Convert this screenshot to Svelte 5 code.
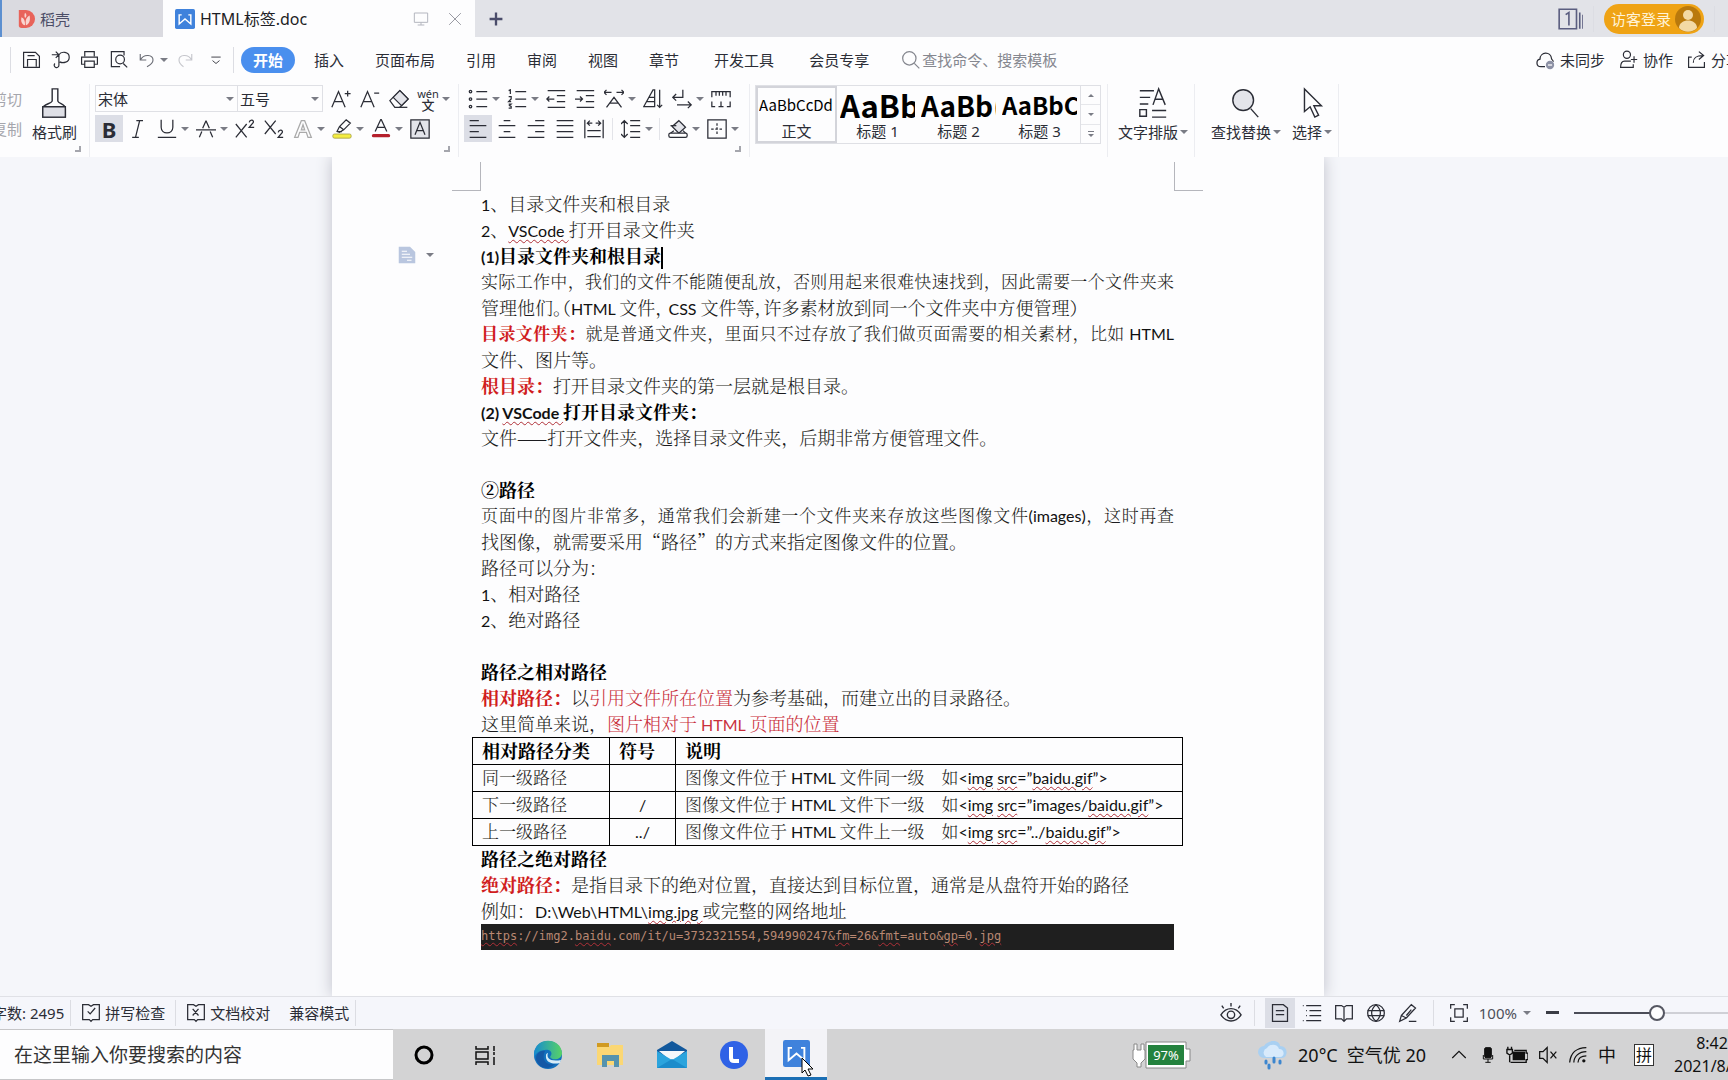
<script>
  const icons = {
    save: '<path d="M2 3h15l5 5v14H2z"/><path d="M7 21v-9h11v9M7 7h9"/>',
    output: '<path d="M1 6h8M6 2l4 4-4 4M5 17a3 3 0 1 0 5 2V6c3-5 13-4 13 3s-8 8-12 6"/>',
    print: '<path d="M6 8V2h12v6M6 18H2V9h20v9h-4M6 14h12v8H6z"/>',
    preview: '<path d="M19 7V2H3v19h11M18 17l5 5"/><circle cx="14" cy="12" r="5.500"/>',
    undo: '<path d="M3 4v8h8M3 12c5-9 17-7 17 0 0 4-4 7-8 9"/>',
    redo: '<path d="M21 4v8h-8M21 12c-5-9-17-7-17 0 0 4 3 7 6 9"/>',
    more: '<path d="M4 7h16M6 13l6 5 6-5"/>',
    search: '<circle cx="10" cy="10" r="8"/><path d="M16 16l6 6"/>',
    cloud: '<path d="M12 20H7c-6 0-6-8-1-9 0-9 13-10 14 0 1 1 2 2 2 3"/><circle cx="18" cy="18" r="5" fill="#8d91a5" stroke="none"/><path d="M15.500 18h5" stroke="#fff"/>',
    person: '<circle cx="10" cy="6" r="4.500"/><path d="M15 14H7c-3 0-5 2-5 8h16v-4M19 8v8M15 12h8"/>',
    share: '<path d="M6 9H2v13h20v-7M8 16c0-7 4-9 12-9M15 2l6 5-6 5"/>',
    grow: '<path d="M1 22L9 3l8 19M4 15h10M20 2v7M16.500 5.500h7"/>',
    shrink: '<path d="M1 22L9 3l8 19M4 15h10M17 5h6"/>',
    eraser: '<path d="M1 14L13 2l10 10-10 10H7z" /><path d="M5 10L13 2l10 10-8 8z" fill="#e3e4ea"/><path d="M12 22h10"/>',
    italic: '<path d="M10 2h8M5 22h8M14 2l-5 20"/>',
    under: '<path d="M5 1v9c0 9 14 9 14 0V1M1 22h22"/>',
    strike: '<path d="M12 2l-4 9M12 2l4 9M0 13h24M7 15l-3 7M17 15l3 7"/>',
    sup: '<path d="M1 6l13 16M14 6L1 22M17 4c1-4 6-3 5 0l-5 6h6"/>',
    sub: '<path d="M1 2l13 16M14 2L1 18M17 16c1-4 6-3 5 0l-5 6h6"/>',
    outline: '<path d="M2 22L10 2h4l8 20h-4l-2-6H8l-2 6zM10 13h4l-2-6z" stroke="#aaa"/>',
    marker: '<path d="M6 15l3-6 8-8 5 4-8 8-5 3zM9 9l5 4M6 15h6"/><rect x="1" y="18" width="22" height="5" rx="2" fill="#f4ed42" stroke="#a5a04a" stroke-width="1"/>',
    color: '<path d="M5 15L12 0l7 15M8 10h8"/><rect x="1" y="18" width="22" height="4" rx="2" fill="#b5202c" stroke="none"/>',
    boxed: '<path d="M1 1h22v22H1z" fill="#e3e4ea"/><path d="M6 19L12 4l6 15M8 14h8"/>',
    bullets: '<path d="M10 3h13M10 12h13M10 21h13"/><circle cx="3" cy="3" r="1.500"/><circle cx="3" cy="12" r="1.500"/><circle cx="3" cy="21" r="1.500"/>',
    numbers: '<path d="M10 3h13M10 12h13M10 21h13M2 2l2-1v5M2 9h3v3l-3 3h3M2 18h3l-2 2 2 1v2H2"/>',
    outdent: '<path d="M2 2h21M13 8h10M13 15h10M2 22h21M1 12h9M4 9l-3 3 3 3"/>',
    indent: '<path d="M2 2h21M13 8h10M13 15h10M2 22h21M0 12h9M6 9l3 3-3 3"/>',
    scale: '<path d="M3 22L12 10l9 12M7 17h10M0 4h9M3 1L0 4l3 3M15 4h9M21 1l3 3-3 3"/>',
    sort: '<path d="M1 21L12 1h2v20zM7 10h7M5 15h9M20 1v21M17 19l3 3 3-3"/>',
    wrap: '<path d="M13 1v9H1M5 6l-4 4 4 4M6 19h17M19 15l4 4-4 4"/>',
    ruler: '<path d="M1 10V3h22v7M6 3v5M10 3v5M14 3v5M18 3v5M1 15v6h4M12 15v6M9 21h6M19 21h4v-6"/>',
    left: '<path d="M2 2h11M2 8h20M2 15h11M2 22h20"/>',
    center: '<path d="M8 2h8M2 8h20M8 15h8M2 22h20"/>',
    right: '<path d="M11 2h11M2 8h20M11 15h11M2 22h20"/>',
    justify: '<path d="M2 2h20M2 8h20M2 15h20M2 22h20"/>',
    spread: '<path d="M1 1v22M23 1v22M4 14h16M4 21h16M4 5h6M14 5h6M7 2L4 5l3 3M17 2l3 3-3 3"/>',
    spacing: '<path d="M4 2v20M0 6l4-4 4 4M0 18l4 4 4-4M11 2h12M11 8h12M11 15h12M11 22h12"/>',
    fill: '<path d="M5 9l8-7 8 8-8 7z" fill="#e3e4ea"/><path d="M3 8h7"/><path d="M3 17l4-3M21 17l-3-3"/><rect x="1" y="17" width="22" height="5" rx="2" fill="#fff"/>',
    border: '<path d="M1 1h22v22H1z"/><path d="M12 5v14M5 12h14" stroke-dasharray="3 2"/>',
    brush: '<path d="M14 2h6v13c1 3 8 3 8 8v9H4v-9c0-5 9-5 10-8z"/><path d="M4 21h24v11H4z" fill="#dedfe6"/>',
    textlay: '<path d="M3 4h15M3 11h11M3 18h9M3 24h7v7H3zM16 25h15M16 32h15M17 19L23 2l7 17M19 13h8"/>',
    find: '<circle cx="14" cy="14" r="11" fill="#e3e4ea"/><path d="M22 23l8 9"/>',
    select: '<path d="M9 2v24l6-5 5 11 4-2-5-10h8z"/>',
    pages: '<path d="M2 3h16v18H2zM21 6v15M24 8v13M8 8l3-2v12"/>',
    spell: '<path d="M12 22l-2-2H2V2h7l3 2 3-2h7v18h-8zM8 10l3 3 6-7"/>',
    proof: '<path d="M12 22l-2-2H2V2h7l3 2 3-2h7v18h-8zM8 7l7 8M15 7l-7 8"/>',
    eye: '<path d="M1 14c6-9 16-9 22 0-6 9-16 9-22 0zM12 5V1M4 7L2 4M20 7l2-3"/><circle cx="12" cy="14" r="4"/>',
    doc: '<path d="M3 2h13l5 4v16H3zM7 9h10M7 14h10"/>',
    list: '<path d="M5 3h18M9 9h14M9 15h14M5 21h18M1 3h1M5 9h1M5 15h1M1 21h1"/>',
    book: '<path d="M12 22l-3-3H2V3h7l3 2 3-2h7v16h-7zM12 5v16"/>',
    globe: '<circle cx="12" cy="12" r="10"/><path d="M12 2c-7 6-7 14 0 20M12 2c7 6 7 14 0 20M2 9h20M2 15h20"/>',
    pen: '<path d="M4 15L16 2l5 4L10 18l-8 4zM13 22h9M4 15l6 3M16 8l-6 7"/>',
    focus: '<path d="M2 7V2h5M17 2h5v5M22 17v5h-5M7 22H2v-5M7 7h10v10H7z"/>',
    up: '<path d="M3 16l9-9 9 9"/>',
    mic: '<rect x="7" y="1" width="10" height="15" rx="2" fill="currentColor"/><path d="M5 12v6h14v-6M12 18v5M8 23h8"/>',
    power: '<path d="M8 9h12v8H8z" fill="currentColor"/><path d="M5 20h17v-3h2v-7h-2V7H9M4 12v8M1 6h6v4l-3 2-3-2zM2 6V3M6 6V3"/>',
    mute: '<path d="M2 8h4l5-5v18l-5-5H2zM15 8l7 8M22 8l-7 8"/>',
    wifi: '<path d="M2 21C3 10 10 3 22 3M7 21c0-7 6-13 15-13M12 21c0-5 4-8 10-8"/><circle cx="19" cy="19" r="2" fill="currentColor" stroke="none"/>',
    screen: '<path d="M2 3h20v14H2zM12 17v4M7 21h10"/>',
    close: '<path d="M2 2l20 20M22 2L2 22"/>',
    plus: '<path d="M12 1v22M1 12h22"/>',
    note: '<path d="M1 1h15l7 7v15H1z" fill="#b9c6df" stroke="none"/><path d="M5 7h7M5 11h11M5 15h14M12 19h6" stroke="#fff"/>'
  };

  const menus = ['插入', '页面布局', '引用', '审阅', '视图', '章节', '开发工具', '会员专享'];
  const quick = [['save', '保存'], ['output', '输出'], ['print', '打印'], ['preview', '打印预览']];
  const fontRow1 = [['grow', '增大字号'], ['shrink', '减小字号'], ['eraser', '清除格式']];
  const fontRow2 = [
    ['italic', '倾斜'], ['under', '下划线', 1], ['strike', '删除线', 1], ['sup', '上标'], ['sub', '下标'],
    ['outline', '文字效果', 1], ['marker', '突出显示', 1], ['color', '字体颜色', 1], ['boxed', '字符底纹']
  ];
  const paraRow1 = [
    ['bullets', '项目符号', 1], ['numbers', '编号', 1], ['outdent', '减少缩进'], ['indent', '增加缩进'],
    ['scale', '中文版式', 1], ['sort', '排序'], ['wrap', '显示标记', 1], ['ruler', '制表位']
  ];
  const aligns = [['center', '居中'], ['right', '右对齐'], ['justify', '两端对齐'], ['spread', '分散对齐']];
  const headings = [['标题 1', 'h1', 'AaBb'], ['标题 2', 'h2', 'AaBb('], ['标题 3', 'h3', 'AaBbCc']];
  const views = [['list', '大纲'], ['book', '阅读'], ['globe', 'Web 版式'], ['pen', '写作']];
  let zoom = $state(49);
</script>

{#snippet icon(name, cls = 'i20', box = 24)}
  <svg class="ico {cls}" viewBox="0 0 {box} {box}" aria-hidden="true">{@html icons[name]}</svg>
{/snippet}

{#snippet caret()}<span class="caret"></span>{/snippet}

{#snippet tool(name, label, drop)}
  <button class="tool" class:drop aria-label={label}>
    <span class="cell">{@render icon(name)}</span>{#if drop}{@render caret()}{/if}
  </button>
{/snippet}

{#snippet wps()}
  <svg class="wps" viewBox="0 0 24 24" aria-hidden="true">
    <rect width="24" height="24" rx="2" fill="#3f82dc" />
    <path d="M8 7H5v11l7-6 7 6V7h-3" fill="none" stroke="#fff" stroke-width="1.700" />
  </svg>
{/snippet}

<div class="app">
  <header class="tabs">
    <button class="tab home">
      <svg class="i18" viewBox="0 0 20 20" aria-hidden="true"><path d="M2 0h8a10 10 0 0 1 0 20H5a3 3 0 0 1-3-3z" fill="#e8635a" /><path d="M9 17C5 16 4 12 5 8c3 1 4 4 4 9zM10 17c-1-5 0-9 4-11 1 5 0 9-4 11z" fill="#f9d5d0" /><path d="M9 9c-1-2-1-4 0-6 2 2 2 4 0 6z" fill="#f9d5d0" /></svg>
      稻壳
    </button>
    <div class="tab current">
      {@render wps()}<span class="name">HTML标签.doc</span>
      {@render icon('screen', 'i16 faint')}
      <button class="plain" aria-label="关闭">{@render icon('close', 'i14')}</button>
    </div>
    <button class="plain add" aria-label="新建">{@render icon('plus', 'i14 bold')}</button>
    <div class="account">
      <button class="plain" aria-label="窗口">{@render icon('pages', 'i26')}</button>
      <span class="bar"></span>
      <button class="login">访客登录
        <svg viewBox="0 0 26 26" aria-hidden="true"><circle cx="13" cy="13" r="13" fill="#b9790c" /><circle cx="13" cy="9" r="5" fill="#f3d9a4" /><path d="M4 22c0-10 18-10 18 0-5 5-13 5-18 0" fill="#f3d9a4" /></svg>
      </button>
      <span class="bar"></span>
    </div>
  </header>

  <nav class="menu">
    <span class="bar"></span>
    <div class="quick">
      {#each quick as [n, l]}<button class="plain" aria-label={l}>{@render icon(n, 'i19')}</button>{/each}
    </div>
    <button class="plain undo" aria-label="撤销">{@render icon('undo', 'i18')}{@render caret()}</button>
    <button class="plain redo" aria-label="恢复">{@render icon('redo', 'i18')}</button>
    <button class="plain morebtn" aria-label="更多">{@render icon('more', 'i14')}</button>
    <span class="bar"></span>
    <button class="start">开始</button>
    <div class="items">
      {#each menus as m, i}<button class="plain" class:wide={i > 5}>{m}</button>{/each}
    </div>
    <label class="find">{@render icon('search', 'i20')}<input placeholder="查找命令、搜索模板" aria-label="查找命令、搜索模板" /></label>
    <div class="sync">
      <button class="plain">{@render icon('cloud', 'i20')}未同步</button>
      <button class="plain">{@render icon('person', 'i19')}协作</button>
      <button class="plain">{@render icon('share', 'i19')}分享</button>
    </div>
  </nav>

  <section class="ribbon">
    <div class="group clip">
      <div class="cut"><button class="plain">剪切</button><button class="plain">复制</button></div>
      <button class="big">{@render icon('brush', 'i32', 34)}<span>格式刷</span></button>
      <span class="corner"></span>
    </div>
    <div class="group">
      <div class="row">
        <div class="combo">
          <label class="family"><select aria-label="字体"><option>宋体</option></select>{@render caret()}</label>
          <label class="size"><select aria-label="字号"><option>五号</option></select>{@render caret()}</label>
        </div>
        {#each fontRow1 as [n, l]}{@render tool(n, l)}{/each}
        <button class="tool drop" aria-label="拼音指南"><span class="cell pinyin"><small>wén</small><b>文</b></span>{@render caret()}</button>
      </div>
      <div class="row">
        <button class="tool on strong" aria-label="加粗">B</button>
        {#each fontRow2 as [n, l, d]}{@render tool(n, l, d)}{/each}
      </div>
      <span class="corner"></span>
    </div>
    <div class="group para">
      <div class="row">
        {#each paraRow1 as [n, l, d]}{@render tool(n, l, d)}{/each}
      </div>
      <div class="row">
        <button class="tool on" aria-label="左对齐"><span class="cell">{@render icon('left')}</span></button>
        {#each aligns as [n, l]}{@render tool(n, l)}{/each}
        <span class="sep"></span>
        {@render tool('spacing', '行距', 1)}
        <span class="sep"></span>
        {@render tool('fill', '底纹', 1)}
        {@render tool('border', '边框', 1)}
      </div>
      <span class="corner"></span>
    </div>
    <div class="group">
      <div class="styles">
        <button class="style chosen"><span class="demo">AaBbCcDd</span><span>正文</span></button>
        {#each headings as [label, cls, sample]}
          <button class="style"><span class="demo {cls}">{sample}</span><span>{label}</span></button>
        {/each}
        <div class="spin">
          <button aria-label="上移"><span class="caret flip"></span></button>
          <button aria-label="下移">{@render caret()}</button>
          <button aria-label="全部样式" class="all">{@render caret()}</button>
        </div>
      </div>
    </div>
    <div class="group">
      <button class="big">{@render icon('textlay', 'i32', 34)}<span>文字排版{@render caret()}</span></button>
    </div>
    <div class="group pair">
      <button class="big">{@render icon('find', 'i32', 34)}<span>查找替换{@render caret()}</span></button>
      <button class="big">{@render icon('select', 'i32', 34)}<span>选择{@render caret()}</span></button>
    </div>
  </section>

  <main class="canvas">
    <article class="page">
      <div class="marks"><span></span><span></span></div>
      <p><span class="en">1</span>、目录文件夹和根目录</p>
      <p><span class="en">2</span>、<span class="en"><u>VSCode&nbsp;</u></span>打开目录文件夹</p>
      <p class="b anchor"><button class="note" aria-label="段落布局">{@render icon('note', 'i18')}{@render caret()}</button><span class="en">(1)</span>目录文件夹和根目录<span class="cursor"></span></p>
      <p class="full">实际工作中，我们的文件不能随便乱放，否则用起来很难快速找到，因此需要一个文件夹来</p>
      <p class="tight">管理他们。（<span class="en">HTML&nbsp;</span>文件，<span class="en">&nbsp;CSS&nbsp;</span>文件等，许多素材放到同一个文件夹中方便管理）</p>
      <p class="full"><b class="red">目录文件夹：</b>就是普通文件夹，里面只不过存放了我们做页面需要的相关素材，比如<span class="en">&nbsp;HTML</span></p>
      <p>文件、图片等。</p>
      <p><b class="red">根目录：</b>打开目录文件夹的第一层就是根目录。</p>
      <p class="b"><span class="en">(2)&nbsp;<u>VSCode&nbsp;</u></span>打开目录文件夹：</p>
      <p>文件——打开文件夹，选择目录文件夹，后期非常方便管理文件。</p>
      <p>&nbsp;</p>
      <p class="b">②路径</p>
      <p class="full">页面中的图片非常多，通常我们会新建一个文件夹来存放这些图像文件<span class="en">(images)</span>，这时再查</p>
      <p>找图像，就需要采用“路径”的方式来指定图像文件的位置。</p>
      <p>路径可以分为：</p>
      <p><span class="en">1</span>、相对路径</p>
      <p><span class="en">2</span>、绝对路径</p>
      <p>&nbsp;</p>
      <p class="b">路径之相对路径</p>
      <p><b class="red">相对路径：</b>以<span class="rose">引用文件所在位置</span>为参考基础，而建立出的目录路径。</p>
      <p>这里简单来说，<span class="rose">图片相对于<span class="en">&nbsp;HTML&nbsp;</span>页面的位置</span></p>
      <table>
        <thead><tr><th class="kind">相对路径分类</th><th class="sign">符号</th><th>说明</th></tr></thead>
        <tbody>
          <tr><td>同一级路径</td><td></td><td>图像文件位于<span class="en">&nbsp;HTML&nbsp;</span>文件同一级　如<span class="en">&lt;<u>img</u> <u>src</u>=”<u>baidu.gif</u>”&gt;</span></td></tr>
          <tr><td>下一级路径</td><td class="mid"><span class="en">/</span></td><td>图像文件位于<span class="en">&nbsp;HTML&nbsp;</span>文件下一级　如<span class="en">&lt;<u>img</u> <u>src</u>=”images/<u>baidu.gif</u>”&gt;</span></td></tr>
          <tr><td>上一级路径</td><td class="mid"><span class="en">../</span></td><td>图像文件位于<span class="en">&nbsp;HTML&nbsp;</span>文件上一级　如<span class="en">&lt;<u>img</u> <u>src</u>=”../<u>baidu.gif</u>”&gt;</span></td></tr>
        </tbody>
      </table>
      <p class="b">路径之绝对路径</p>
      <p><b class="red">绝对路径：</b>是指目录下的绝对位置，直接达到目标位置，通常是从盘符开始的路径</p>
      <p>例如：<span class="en">D:\Web\HTML\<u>img.jpg&nbsp;</u></span>或完整的网络地址</p>
      <p class="code"><u>https</u>://img2.<u>baidu</u>.com/it/u=3732321554,594990247&amp;<u>fm</u>=26&amp;<u>fmt</u>=auto&amp;<u>gp</u>=0.<u>jpg</u></p>
    </article>
  </main>

  <footer class="status">
    <span class="count">字数: 2495</span>
    <span class="bar"></span>
    <button class="plain">{@render icon('spell', 'i20')}拼写检查</button>
    <span class="bar"></span>
    <button class="plain">{@render icon('proof', 'i20')}文档校对</button>
    <button class="plain mode">兼容模式</button>
    <span class="bar"></span>
    <div class="right">
      <button class="plain" aria-label="护眼">{@render icon('eye', 'i22')}</button>
      <span class="bar"></span>
      <div class="views">
        <button class="view on" aria-label="页面视图">{@render icon('doc', 'i20')}</button>
        {#each views as [n, l]}<button class="view" aria-label={l}>{@render icon(n, 'i20')}</button>{/each}
      </div>
      <span class="bar"></span>
      <button class="plain" aria-label="适合页面">{@render icon('focus', 'i20')}</button>
      <button class="plain pct">100%{@render caret()}</button>
      <button class="plain minus" aria-label="缩小"><span></span></button>
      <input type="range" min="0" max="100" bind:value={zoom} aria-label="缩放" />
    </div>
  </footer>

  <div class="taskbar">
    <input class="ask" placeholder="在这里输入你要搜索的内容" aria-label="搜索" />
    <div class="apps">
      <button aria-label="Cortana"><svg class="i24" viewBox="0 0 24 24"><circle cx="12" cy="12" r="8" fill="none" stroke="#000" stroke-width="3" /></svg></button>
      <button aria-label="任务视图"><svg class="i24" viewBox="0 0 24 24"><path d="M2 3v3h12V3M2 22v-3h12v3M2 9h12v7H2zM20 3v5M20 14v8M20 9v3" fill="none" stroke="#111" stroke-width="1.500" /></svg></button>
      <button aria-label="Edge"><svg class="i30" viewBox="0 0 30 30"><defs><linearGradient id="eg" x2="1" y2="0"><stop stop-color="#168bd0" /><stop offset="1" stop-color="#58d365" /></linearGradient></defs><circle cx="15" cy="15" r="14" fill="#1370bd" /><path d="M1 14C2-4 28-3 29 13c0 7-10 8-12 4 4-5-1-8-5-7C6 10 2 14 1 18z" fill="url(#eg)" /><path d="M15 13c-2 5 2 9 13 7l-1 3c-8 2-15-1-14-8 0-1 1-2 2-2" fill="#d7ecf7" /><path d="M3 19c0-6 5-9 9-8-4 8 1 15 10 13-8 8-17 3-19-5" fill="#1559a6" /></svg></button>
      <button aria-label="文件资源管理器"><svg class="i30" viewBox="0 0 30 30"><path d="M2 3h12v5H2z" fill="#d09a22" /><path d="M2 7h12l2-2h12v20H2z" fill="#fbd774" /><path d="M7 27V15h17v12h-5v-6h-7v6z" fill="#5593ae" /></svg></button>
      <button aria-label="邮件"><svg class="i30" viewBox="0 0 30 30"><path d="M0 10L15 1l15 9v18H0z" fill="#12589c" /><path d="M2 11h26L15 22z" fill="#f4f8fb" /><path d="M0 11l15 9 15-9v17H0z" fill="#2ba4dd" /><path d="M4 11h22L15 19z" fill="#f4f8fb" /><path d="M0 28l15-9 15 9z" fill="#1b8ccb" /></svg></button>
      <button aria-label="联想"><svg class="i30" viewBox="0 0 30 30"><circle cx="15" cy="15" r="14" fill="#2f62e6" /><path d="M12 7v11c0 2 1 3 3 3h5" fill="none" stroke="#fff" stroke-width="4" /></svg></button>
      <button class="active" aria-label="WPS">{@render wps()}<svg class="mouse" viewBox="0 0 12 20"><path d="M1 1v15l3-3 3 6 3-1-3-6h5z" fill="#fff" stroke="#000" /></svg></button>
    </div>
    <div class="tray">
      <svg class="charge" viewBox="0 0 62 28" aria-hidden="true"><path d="M4 9V3h3v6h4V3h3v6h1v9l-4 4v4H7v-4l-4-4V9z" fill="#fff" stroke="#888" /><path d="M16 1h40v7h4v12h-4v7H16z" fill="#fff" stroke="#888" /><path d="M18 4h36v20H18z" fill="#24823e" /><text x="36" y="19" text-anchor="middle">97%</text></svg>
      <svg class="i30 rain" viewBox="0 0 30 30" aria-hidden="true"><path d="M6 18a6 6 0 0 1 0-12C10-1 22 0 22 6c9 0 8 12 2 12z" fill="#a9d0f2" /><path d="M8 17a5 5 0 0 1 1-9c3-5 11-4 12 1 6 0 6 8 1 8z" fill="#d8eafb" /><path d="M8 21v2M16 18v4M22 21v2M11 25v3" stroke="#3c86cf" stroke-width="3" stroke-linecap="round" /></svg>
      <span class="weather">20°C&ensp;空气优 20</span>
      {@render icon('up', 'i18 dark')}
      {@render icon('mic', 'mic dark')}
      {@render icon('power', 'i22 dark')}
      {@render icon('mute', 'i20 dark')}
      {@render icon('wifi', 'i20 dark')}
      <span class="zh">中</span>
      <span class="ime">拼</span>
      <div class="clock"><span>8:42</span><span>2021/8/11</span></div>
    </div>
  </div>
</div>

<style>
  :global(body) { overflow: hidden; }
  .app { height: 100vh; display: flex; flex-direction: column; overflow: hidden; background: #fdfdfe; color: #2b2d36; font: 15px/20px "Noto Sans", "Noto Sans CJK SC", sans-serif; white-space: nowrap; }
  button, input, select { font: inherit; color: inherit; border: 0; padding: 0; margin: 0; background: none; }
  button { display: flex; align-items: center; }
  input:focus { outline: none; }
  .ico { fill: none; stroke: currentColor; stroke-width: 1.5; flex: none; display: block; }
  .i14 { width: 14px; height: 14px; }
  .i16 { width: 16px; height: 16px; }
  .i18 { width: 18px; height: 18px; }
  .i19 { width: 19px; height: 19px; }
  .i20 { width: 20px; height: 20px; }
  .i22 { width: 22px; height: 22px; }
  .i24 { width: 24px; height: 24px; }
  .i26 { width: 26px; height: 26px; }
  .i30 { width: 30px; height: 30px; }
  .i32 { width: 32px; height: 32px; }
  .mic { width: 16px; height: 24px; margin-left: 2px; }
  .faint { color: #b4b6bf; }
  .bold { stroke-width: 4; }
  .dark { color: #111; }
  .caret { display: inline-block; flex: none; width: 0; border: 4px solid transparent; border-top-color: #7a7c85; border-bottom: 0; }
  .flip { transform: rotate(180deg); }
  .bar { width: 1px; height: 26px; background: #dcdde3; flex: none; }

  .tabs { display: flex; height: 37px; flex: none; background: #e2e3e8; }
  .tab { display: flex; align-items: center; }
  .home { width: 163px; border-left: 2px solid #5c8fd0; padding-left: 15px; gap: 5px; background: #dadae0; color: #4b4d66; }
  .current { width: 312px; box-sizing: border-box; padding: 0 13px 0 12px; gap: 5px; background: #fdfdfe; font-size: 16px; color: #1d1e25; }
  .current .name { flex: 1; }
  .current .faint { margin-right: 14px; }
  .current button { color: #8b8d96; }
  .wps { width: 20px; height: 20px; flex: none; }
  .add { padding: 0 14px; color: #4a4c6a; }
  .account { margin-left: auto; display: flex; align-items: center; gap: 10px; padding-right: 13px; color: #5b5e80; }
  .login { height: 30px; box-sizing: border-box; padding: 0 3px 0 7px; border-radius: 15px; background: #efa315; color: #fff3d8; gap: 4px; }
  .login svg { width: 26px; height: 26px; }

  .menu { display: flex; align-items: center; height: 47px; box-sizing: border-box; flex: none; padding: 0 0 2px 10px; overflow: hidden; }
  .quick { display: flex; gap: 10px; padding-left: 11px; }
  .undo { margin-left: 10px; gap: 4px; color: #6a6c75; }
  .redo { margin-left: 8px; color: #c5c6cc; }
  .morebtn { margin: 0 10px 0 15px; }
  .start { height: 26px; margin: 0 19px 0 7px; padding: 0 12px; border-radius: 13px; background: #4a8fee; color: #fff; font-weight: 700; }
  .items { display: flex; gap: 31px; }
  .items .wide { margin-left: 4px; }
  .find { display: flex; align-items: center; gap: 1px; margin-left: 32px; color: #85878f; }
  .find input { width: 160px; }
  input::placeholder { color: inherit; opacity: 1; }
  .sync { display: flex; gap: 14px; margin-left: auto; margin-right: -13px; }
  .sync button { gap: 5px; }

  .ribbon { display: flex; height: 73px; flex: none; overflow: hidden; }
  .group { position: relative; display: flex; flex-direction: column; gap: 3px; padding: 1px 6px 0 5px; border-right: 1px solid #ecedf1; }
  .corner { position: absolute; right: 8px; bottom: 5px; width: 4px; height: 4px; border: solid #a5a6ad; border-width: 0 2px 2px 0; }
  .clip { flex-direction: row; width: 78px; gap: 5px; }
  .para { padding-right: 8px; }
  .cut { display: flex; flex-direction: column; gap: 10px; margin-left: -13px; padding-top: 4px; color: #a5a6ad; }
  .row { display: flex; gap: 1px; height: 27px; align-items: center; }
  .tool { height: 27px; flex: none; }
  .tool.drop { width: 38px; }
  .cell { width: 28px; display: flex; justify-content: center; }
  .sep { width: 1px; height: 22px; margin: 0 3px; background: #e3e4e9; }
  .on { background: #dcdee6; }
  .strong { width: 28px; justify-content: center; font-size: 22px; font-weight: 700; }
  .pinyin { flex-direction: column; align-items: center; padding-top: 3px; }
  .pinyin small { font-size: 11px; line-height: 10px; }
  .pinyin b { font-size: 13px; line-height: 13px; font-weight: 500; }
  .combo { display: flex; width: 228px; height: 27px; box-sizing: border-box; border: 1px solid #dfe0e5; margin-right: 3px; }
  .combo label { display: flex; align-items: center; padding: 0 3px 0 2px; }
  .combo select { appearance: none; flex: 1; min-width: 0; }
  .family { width: 136px; border-right: 1px solid #dfe0e5; }
  .size { flex: 1; }
  .styles { display: flex; height: 59px; box-sizing: border-box; border: 1px solid #dfe0e5; }
  .style { width: 81px; box-sizing: border-box; flex-direction: column; overflow: hidden; padding: 0 1px; border: 2px solid transparent; }
  .chosen { border-color: #d3d4da; }
  .demo { height: 33px; line-height: 34px; font-size: 15px; width: 100%; overflow: hidden; text-align: left; color: #000; flex: none; font-family: "Noto Sans CJK SC", sans-serif; }
  .demo.h1 { font-size: 31px; font-weight: 700; }
  .demo.h2 { font-size: 28px; font-weight: 700; }
  .demo.h3 { font-size: 24px; font-weight: 700; }
  .spin { width: 19px; display: flex; flex-direction: column; border-left: 1px solid #dfe0e5; }
  .spin button { flex: 1; justify-content: center; }
  .spin button + button { border-top: 1px solid #e6e7eb; }
  .spin .caret { border-width: 3px; border-bottom-width: 0; }
  .all { flex-direction: column; gap: 2px; }
  .all::before { content: ""; width: 6px; height: 1px; background: #7a7c85; }
  .big { flex-direction: column; gap: 3px; padding: 2px 0 0 5px; }
  .big .caret { margin: 0 0 4px 2px; }
  .pair { flex-direction: row; gap: 6px; padding-left: 11px; }

  .canvas { flex: 1; min-height: 0; overflow: hidden; display: flex; justify-content: center; padding-right: 72px; background: #f5f6fa; }
  .page { width: 992px; box-sizing: border-box; padding: 0 150px 40px 149px; background: #fdfdfe; box-shadow: 0 0 15px #bfc0ca; font-family: "Noto Serif CJK SC", "Noto Sans CJK SC", sans-serif; font-size: 18px; font-weight: 300; line-height: 24px; color: #1c1c20; }
  .marks { display: flex; justify-content: space-between; box-sizing: border-box; height: 34px; padding-top: 5px; margin: 0 -29px; }
  .marks span { width: 28px; border: solid #b5b6bc; border-width: 0 1px 1px 0; }
  .marks span + span { border-width: 0 0 1px 1px; }
  .page p { margin: 0; height: 26px; }
  .en { font-family: Lato, sans-serif; font-size: 16px; font-weight: 400; line-height: 20px; color: #111; white-space: pre; }
  .b, .page b, th { font-weight: 700; color: #000; }
  .b .en { font-weight: 700; }
  .page .full { font-size: 17px; text-align: justify; text-align-last: justify; }
  .tight { font-feature-settings: "halt"; }
  .page .red { color: #d01c20; }
  .rose, .rose .en { color: #c9303c; }
  u { text-decoration: underline wavy #b03038 1px; text-underline-offset: 2px; }
  .anchor { position: relative; }
  .note { position: absolute; left: -83px; top: 3px; gap: 10px; }
  .cursor { display: inline-block; width: 2px; height: 22px; vertical-align: middle; background: #000; }
  table { width: calc(100% + 18px); margin: 0 -9px; border-collapse: collapse; table-layout: fixed; }
  th, td { border: 1px solid #000; padding: 0 9px 2px; height: 24px; text-align: left; line-height: 24px; }
  td { font-size: 17px; }
  .kind { width: 118px; }
  .sign { width: 47px; }
  .page .mid { text-align: center; }
  .page .code { background: #1f1f1f; color: #b98873; font: 12px/24px "DejaVu Sans Mono", monospace; }

  .status { display: flex; align-items: center; height: 33px; box-sizing: border-box; padding-bottom: 1px; flex: none; border-top: 1px solid #e0e1e6; background: #f5f6fb; overflow: hidden; }
  .count { margin: 0 6px 0 -8px; }
  .status .plain { gap: 4px; margin-left: 10px; margin-right: 10px; }
  .status .mode { margin-left: 9px; margin-right: 6px; }
  .right { display: flex; align-items: center; margin-left: auto; margin-right: -16px; }
  .views { display: flex; gap: 2px; margin: 0 10px; }
  .view { width: 30px; height: 30px; justify-content: center; }
  .status .right .plain { margin: 0 0 0 15px; }
  .status .right .plain:first-child { margin-right: 12px; }
  .status .right .pct { margin-left: 10px; gap: 6px; color: #4e505a; }
  .minus span { width: 13px; height: 3px; background: #3a3c45; }
  input[type="range"] { appearance: none; width: 170px; height: 20px; margin-left: 15px; background: linear-gradient(90deg, #4a4c57 50%, #cfd0d6 50%) center / 100% 2px no-repeat; }
  input[type="range"]::-webkit-slider-thumb { appearance: none; width: 16px; height: 16px; border: 2px solid #555762; border-radius: 50%; background: #fdfdfe; }

  .taskbar { display: flex; height: 51px; flex: none; background: #d3d3d4; color: #111; overflow: hidden; }
  .ask { width: 393px; box-sizing: border-box; padding: 0 14px; border: solid #c6c6c8; border-width: 1px 0; background: #fdfdfe; color: #333; font-size: 19px; }
  .apps { display: flex; }
  .apps button { width: 62px; justify-content: center; position: relative; }
  .active { background: #f3f3f7; border-bottom: 3px solid #1b6fb5; }
  .active .wps { width: 27px; height: 27px; }
  .mouse { position: absolute; left: 36px; top: 28px; width: 12px; height: 20px; }
  .tray { display: flex; align-items: center; margin-left: auto; margin-right: -22px; gap: 10px; }
  .charge { width: 62px; height: 28px; }
  .charge text { font-size: 13px; fill: #fff; }
  .rain { margin-left: 56px; }
  .weather { font-size: 18px; margin-right: 14px; }
  .zh { font-size: 18px; }
  .ime { width: 18px; border: 1px solid #333; background: #fff; font-size: 16px; text-align: center; margin: 0 10px 0 8px; }
  .clock { display: flex; flex-direction: column; align-items: center; font-size: 16px; line-height: 23px; }
</style>
